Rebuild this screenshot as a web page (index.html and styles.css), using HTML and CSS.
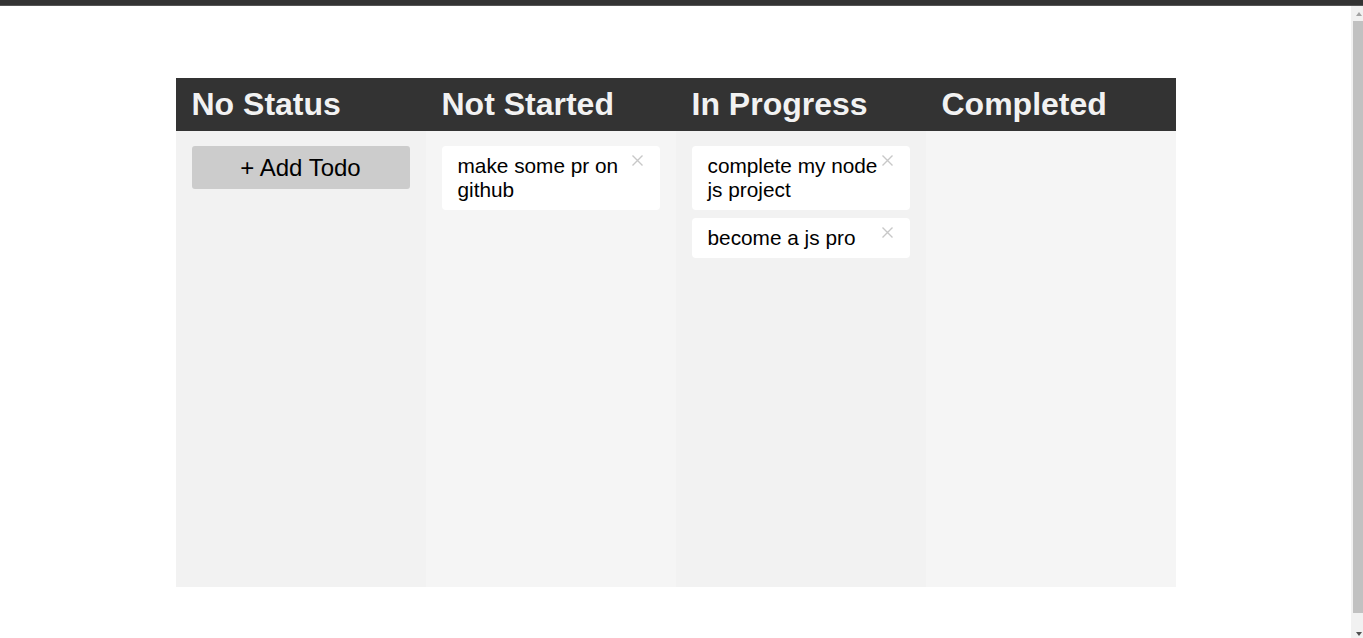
FILE: index.html
```html
<!DOCTYPE html>
<html lang="en">
<head>
<meta charset="utf-8">
<title>Todo Board</title>
<link rel="stylesheet" href="styles.css">
</head>
<body>
<div class="topbar"></div>
<div class="main">
  <div class="page">
    <div class="board">
      <section class="column col-a">
        <h2 class="column-title">No Status</h2>
        <div class="column-body">
          <button class="add-btn">+ Add Todo</button>
        </div>
      </section>
      <section class="column col-b">
        <h2 class="column-title">Not Started</h2>
        <div class="column-body">
          <div class="card">
            <span class="card-text">make some pr on github</span>
            <span class="close"><svg width="11" height="11" viewBox="0 0 11 11"><path d="M0.5 0.5L10.5 10.5M10.5 0.5L0.5 10.5" stroke="#c8c8c8" stroke-width="1.4" fill="none"/></svg></span>
          </div>
        </div>
      </section>
      <section class="column col-a">
        <h2 class="column-title">In Progress</h2>
        <div class="column-body">
          <div class="card">
            <span class="card-text">complete my node js project</span>
            <span class="close"><svg width="11" height="11" viewBox="0 0 11 11"><path d="M0.5 0.5L10.5 10.5M10.5 0.5L0.5 10.5" stroke="#c8c8c8" stroke-width="1.4" fill="none"/></svg></span>
          </div>
          <div class="card">
            <span class="card-text">become a js pro</span>
            <span class="close"><svg width="11" height="11" viewBox="0 0 11 11"><path d="M0.5 0.5L10.5 10.5M10.5 0.5L0.5 10.5" stroke="#c8c8c8" stroke-width="1.4" fill="none"/></svg></span>
          </div>
        </div>
      </section>
      <section class="column col-b">
        <h2 class="column-title">Completed</h2>
        <div class="column-body"></div>
      </section>
    </div>
  </div>
  <div class="scrollbar" aria-hidden="true">
    <div class="sb-btn"><span class="arrow-up"></span></div>
    <div class="sb-track"><div class="sb-thumb"></div></div>
    <div class="sb-btn"><span class="arrow-down"></span></div>
  </div>
</div>
</body>
</html>
```

FILE: styles.css
```css
html, body {
  margin: 0;
  padding: 0;
  height: 100%;
  overflow: hidden;
}
body {
  font-family: "Liberation Sans", Arial, sans-serif;
  background: #ffffff;
  display: flex;
  flex-direction: column;
}
.topbar {
  height: 5px;
  background: #333333;
  border-bottom: 1px solid #555555;
  flex: none;
}
.main {
  flex: 1;
  display: flex;
  min-height: 0;
}
.page {
  flex: 1;
  overflow: hidden;
}
.scrollbar {
  width: 12px;
  flex: none;
  background: #f1f1f1;
  display: flex;
  flex-direction: column;
}
.sb-btn {
  height: 15px;
  flex: none;
  display: flex;
  align-items: center;
  justify-content: flex-end;
  padding-right: 1px;
}
.arrow-up {
  width: 0;
  height: 0;
  border-left: 3.5px solid transparent;
  border-right: 3.5px solid transparent;
  border-bottom: 4px solid #a3a3a3;
  margin-top: 0;
}
.arrow-down {
  width: 0;
  height: 0;
  border-left: 3.5px solid transparent;
  border-right: 3.5px solid transparent;
  border-top: 4px solid #505050;
  margin-top: 6px;
}
.sb-track {
  flex: 1;
  padding-left: 2px;
}
.sb-thumb {
  height: 592px;
  background: #c1c1c1;
}
.board {
  width: 1000px;
  margin: 72px auto 62px;
  display: grid;
  grid-template-columns: repeat(4, 1fr);
  height: 509px;
}
.column {
  display: flex;
  flex-direction: column;
}
.col-a { background: #f2f2f2; }
.col-b { background: #f5f5f5; }
.column-title {
  margin: 0;
  background: #333333;
  color: #f2f2f2;
  font-size: 32px;
  font-weight: bold;
  line-height: 37px;
  padding: 8px 16px;
}
.column-body {
  padding: 15px 16px 16px;
  display: flex;
  flex-direction: column;
  gap: 8px;
}
.add-btn {
  font-family: "Liberation Sans", Arial, sans-serif;
  font-size: 24px;
  line-height: 27px;
  padding: 8px;
  border: none;
  border-radius: 3px;
  background: #cccccc;
  color: #000000;
  width: 100%;
}
.card {
  position: relative;
  background: #ffffff;
  border-radius: 4px;
  padding: 8px 28px 8px 16px;
  font-size: 20.8px;
  line-height: 24px;
  color: #000000;
}
.close {
  position: absolute;
  top: 9px;
  right: 17px;
  width: 11px;
  height: 11px;
  display: block;
}
.close svg { display: block; }
```
